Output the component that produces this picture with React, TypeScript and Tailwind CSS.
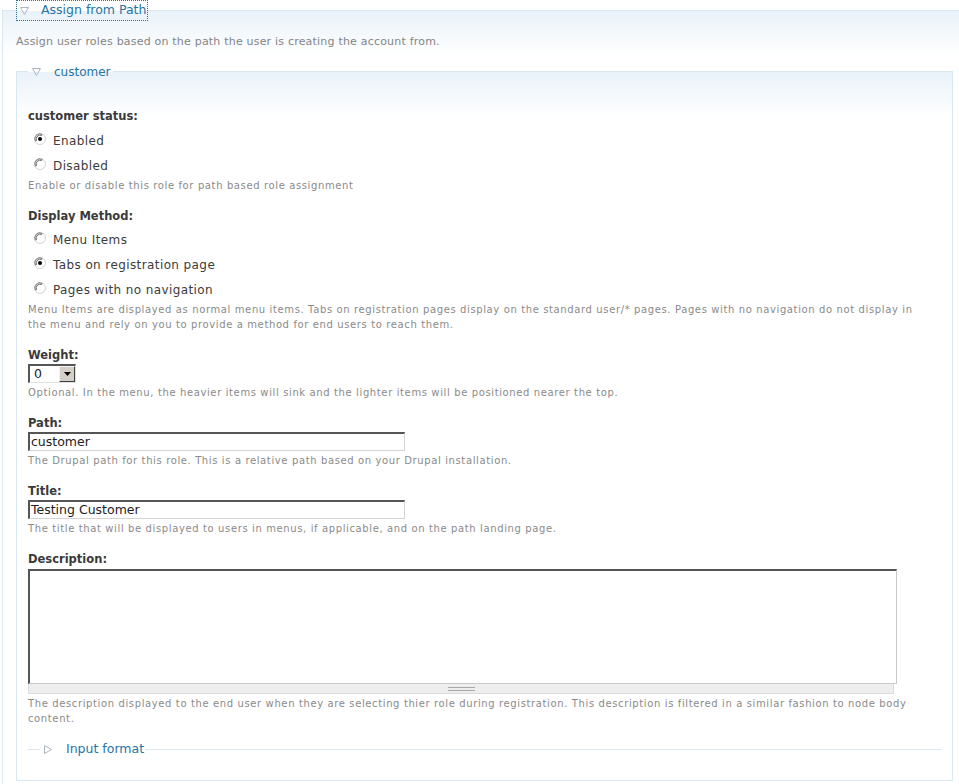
import React from "react";

const blue = "text-[#2474a6]";

function Tri({ dir }: { dir: "down" | "right" }) {
  return dir === "down" ? (
    <svg width="9" height="8" viewBox="0 0 9 8" className="shrink-0">
      <path d="M0.5 0.5 H8.5 L4.5 7.5 Z" fill="none" stroke="#aab7c2" strokeWidth="1" />
    </svg>
  ) : (
    <svg width="8" height="9" viewBox="0 0 8 9" className="shrink-0">
      <path d="M0.5 0.5 V8.5 L7.5 4.5 Z" fill="none" stroke="#aab7c2" strokeWidth="1" />
    </svg>
  );
}

function Radio({ label, checked }: { label: string; checked?: boolean }) {
  return (
    <div className="flex h-[25px] items-center pl-[6px]">
      <svg width="12" height="12" viewBox="0 0 12 12" className="mb-[3px] shrink-0">
        <circle cx="6" cy="6" r="5.5" fill="#fff" stroke="#d6d3cc" />
        <path d="M1.6 8.5 A5 5 0 0 1 8.5 1.6" fill="none" stroke="#808080" strokeWidth="1" />
        <path d="M2.5 7.8 A4 4 0 0 1 7.8 2.5" fill="none" stroke="#404040" strokeWidth="0.8" />
        {checked && <circle cx="6" cy="6" r="2" fill="#000" />}
      </svg>
      <span className="ml-[7px] text-[12px] tracking-[0.4px] text-[#3c3c3c]">{label}</span>
    </div>
  );
}

function Label({ children }: { children: React.ReactNode }) {
  return <div className="text-[11.5px] font-bold leading-[16px] text-[#3a3a3a]">{children}</div>;
}

function Desc({ children, className = "" }: { children: React.ReactNode; className?: string }) {
  return (
    <div className={`text-[10px] leading-[15px] tracking-[0.62px] text-[#8a8a8a] ${className}`}>{children}</div>
  );
}

function TextInput({ value }: { value: string }) {
  return (
    <div className="mt-[1px] flex h-[19px] w-[377px] items-center border-t-2 border-l-2 border-r border-b border-t-[#555] border-l-[#555] border-r-[#d4d4d4] border-b-[#d4d4d4] bg-white pl-[1px] text-[12.5px] text-[#222]">
      {value}
    </div>
  );
}

export default function App() {
  return (
    <div className="h-[784px] w-full overflow-hidden bg-white font-['DejaVu_Sans',Verdana,sans-serif]">
      <fieldset className="ml-[2px] w-[990px] border border-[#d9e7f0] bg-[linear-gradient(to_bottom,#e9f2f9,#ffffff_45px)] px-[13px] pb-10">
        <legend className="p-0">
          <span className={`flex h-[21px] items-center border border-dotted border-[#2d6f99] pl-[3px] pr-[1px] ${blue}`}>
            <Tri dir="down" />
            <span className="ml-[12px] text-[12.5px]">Assign from Path</span>
          </span>
        </legend>

        <div className="mt-[13px] text-[11px] leading-[15px] tracking-[0.2px] text-[#858585]">
          Assign user roles based on the path the user is creating the account from.
        </div>

        <fieldset className="mt-[14px] w-[937px] border border-[#d9e7f0] bg-[linear-gradient(to_bottom,#e9f2f9,#ffffff_45px)] px-[11px] pb-[22px]">
          <legend className="p-0">
            <span className={`flex h-[17px] items-center pl-[4px] pr-[2px] ${blue}`}>
              <Tri dir="down" />
              <span className="ml-[13px] text-[12px]">customer</span>
            </span>
          </legend>

          <div className="mt-[28px]">
            <Label>customer status:</Label>
            <div className="mt-[4px]">
              <Radio label="Enabled" checked />
              <Radio label="Disabled" />
            </div>
            <Desc>Enable or disable this role for path based role assignment</Desc>
          </div>

          <div className="mt-[15px]">
            <Label>Display Method:</Label>
            <div className="mt-[3px]">
              <Radio label="Menu Items" />
              <Radio label="Tabs on registration page" checked />
              <Radio label="Pages with no navigation" />
            </div>
            <Desc>
              Menu Items are displayed as normal menu items. Tabs on registration pages display on the standard user/*
              pages. Pages with no navigation do not display in
              <br />
              the menu and rely on you to provide a method for end users to reach them.
            </Desc>
          </div>

          <div className="mt-[15px]">
            <Label>Weight:</Label>
            <div className="mt-[1px] flex h-[19px] w-[48px] items-stretch border-t-2 border-l-2 border-r border-b border-t-[#555] border-l-[#555] border-r-[#e0e0e0] border-b-[#e0e0e0] bg-white">
              <span className="flex-1 pl-[4px] text-[12.5px] leading-[16px] text-[#222]">0</span>
              <span className="flex w-[16px] items-center justify-center border border-t-[#f4f4f4] border-l-[#f4f4f4] border-r-[#404040] border-b-[#404040] bg-[#d4d0c8]">
                <svg width="7" height="4" viewBox="0 0 7 4">
                  <path d="M0 0 H7 L3.5 4 Z" fill="#000" />
                </svg>
              </span>
            </div>
            <Desc className="mt-[2px]">
              Optional. In the menu, the heavier items will sink and the lighter items will be positioned nearer the top.
            </Desc>
          </div>

          <div className="mt-[15px]">
            <Label>Path:</Label>
            <TextInput value="customer" />
            <Desc className="mt-[2px]">The Drupal path for this role. This is a relative path based on your Drupal installation.</Desc>
          </div>

          <div className="mt-[15px]">
            <Label>Title:</Label>
            <TextInput value="Testing Customer" />
            <Desc className="mt-[2px]">
              The title that will be displayed to users in menus, if applicable, and on the path landing page.
            </Desc>
          </div>

          <div className="mt-[15px]">
            <Label>Description:</Label>
            <div className="mt-[2px] w-[869px]">
              <div className="h-[115px] w-[869px] border-t-2 border-l-2 border-r border-b border-t-[#555] border-l-[#555] border-r-[#c8c8c8] border-b-[#c8c8c8] bg-white" />
              <div className="flex h-[10px] w-[866px] items-center justify-center border border-t-0 border-[#dcdcdc] bg-[#eeeeee]">
                <div className="flex w-[27px] flex-col gap-[2px]">
                  <div className="h-px bg-[#a8a8a8]" />
                  <div className="h-px bg-[#a8a8a8]" />
                </div>
              </div>
            </div>
            <Desc className="mt-[2px] w-[900px]">
              The description displayed to the end user when they are selecting thier role during registration. This
              description is filtered in a similar fashion to node body
              <br />
              content.
            </Desc>
          </div>

          <fieldset className="mt-[15px] border-t border-[#d9e7f0] pl-[12px]">
            <legend className="p-0">
              <span className={`flex h-[17px] items-center pl-[4px] pr-[1px] ${blue}`}>
                <Tri dir="right" />
                <span className="ml-[14px] text-[12.5px]">Input format</span>
              </span>
            </legend>
          </fieldset>
        </fieldset>
      </fieldset>
    </div>
  );
}
